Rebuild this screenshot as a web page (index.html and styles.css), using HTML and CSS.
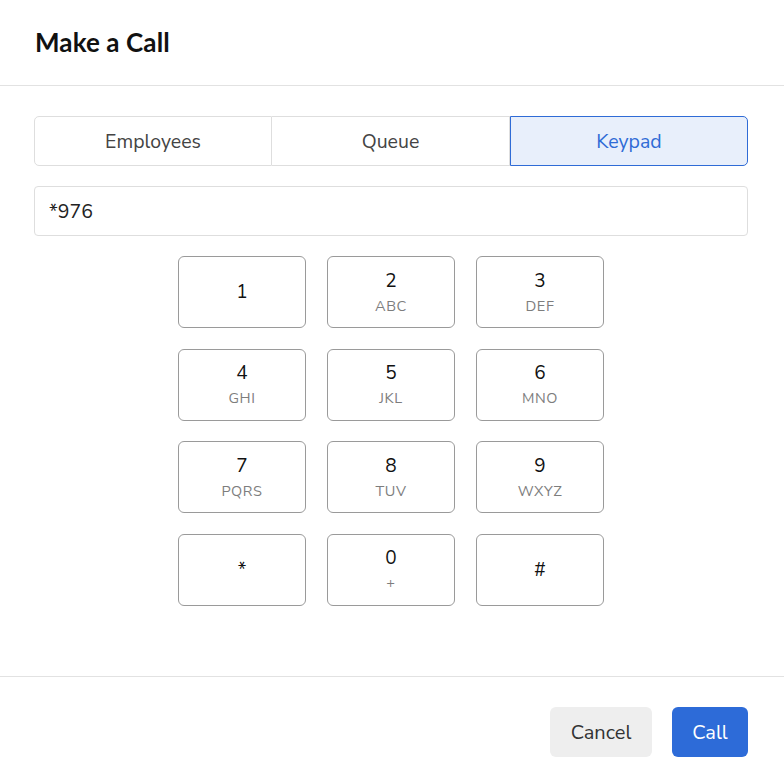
FILE: index.html
```html
<!DOCTYPE html>
<html>
<head>
<meta charset="utf-8">
<link rel="stylesheet" href="styles.css">
</head>
<body>
<div class="dialog">
  <header class="header"><h1 class="title">Make a Call</h1></header>
  <main class="content">
    <div class="tabs">
      <button class="tab">Employees</button>
      <button class="tab">Queue</button>
      <button class="tab active">Keypad</button>
    </div>
    <div class="field">*976</div>
    <div class="keypad">
      <button class="key"><span class="digit">1</span></button>
      <button class="key"><span class="digit">2</span><span class="letters">ABC</span></button>
      <button class="key"><span class="digit">3</span><span class="letters">DEF</span></button>
      <button class="key"><span class="digit">4</span><span class="letters">GHI</span></button>
      <button class="key"><span class="digit">5</span><span class="letters">JKL</span></button>
      <button class="key"><span class="digit">6</span><span class="letters">MNO</span></button>
      <button class="key"><span class="digit">7</span><span class="letters">PQRS</span></button>
      <button class="key"><span class="digit">8</span><span class="letters">TUV</span></button>
      <button class="key"><span class="digit">9</span><span class="letters">WXYZ</span></button>
      <button class="key"><span class="digit">*</span></button>
      <button class="key"><span class="digit">0</span><span class="letters">+</span></button>
      <button class="key"><span class="digit">#</span></button>
    </div>
  </main>
  <footer class="footer">
    <button class="btn cancel">Cancel</button>
    <button class="btn call">Call</button>
  </footer>
</div>
</body>
</html>
```
FILE: styles.css
```css
* { box-sizing: border-box; }
html, body { margin: 0; padding: 0; background: #fff; }
body {
  font-family: "Nunito Sans", "Open Sans", sans-serif;
  color: #222;
  width: 784px;
  height: 775px;
  overflow: hidden;
}
.dialog { display: flex; flex-direction: column; height: 775px; }
.header {
  height: 86px;
  border-bottom: 1px solid #e2e2e2;
  padding: 26px 35px 0;
}
.title {
  margin: 0;
  font-family: "Lato", sans-serif;
  font-weight: 700;
  font-size: 26px;
  line-height: 32px;
  color: #111;
  letter-spacing: 0.1px;
}
.content {
  flex: 1;
  padding: 30px 36px 0 34px;
}
.tabs {
  display: grid;
  grid-template-columns: 1fr 1fr 1fr;
  height: 50px;
}
.tab {
  font: inherit;
  font-size: 19.5px;
  color: #444;
  background: #fff;
  border: 1px solid #dedede;
  border-left: none;
  cursor: pointer;
}
.tab:first-child { border-left: 1px solid #dedede; border-radius: 5px 0 0 5px; }
.tab.active {
  background: #e8effb;
  color: #2f6bd6;
  border: 1px solid #2f6bd6;
  border-radius: 0 5px 5px 0;
}
.field {
  margin-top: 20px;
  height: 50px;
  border: 1px solid #dedede;
  border-radius: 4px;
  padding: 0 14px;
  display: flex;
  align-items: center;
  font-size: 19.5px;
  color: #222;
}
.keypad {
  margin: 20px auto 0;
  width: 426px;
  display: grid;
  grid-template-columns: repeat(3, 128px);
  grid-auto-rows: 72px;
  column-gap: 21px;
  row-gap: 20.5px;
}
.key {
  font: inherit;
  background: #fff;
  border: 1px solid #9a9a9a;
  border-radius: 6px;
  display: flex;
  flex-direction: column;
  align-items: center;
  justify-content: center;
  gap: 5px;
  padding: 0;
  cursor: pointer;
}
.digit { font-size: 19px; color: #111; line-height: 22px; }
.letters { font-size: 14.5px; color: #7d7d7d; line-height: 18px; letter-spacing: 0.6px; }
.footer {
  height: 99px;
  border-top: 1px solid #e2e2e2;
  display: flex;
  justify-content: flex-end;
  align-items: flex-start;
  gap: 20px;
  padding: 30px 36px 0;
}
.btn {
  font: inherit;
  font-size: 20px;
  height: 50px;
  border: none;
  border-radius: 6px;
  cursor: pointer;
}
.cancel { width: 102px; background: #eeeeee; color: #333; }
.call { width: 76px; background: #2d6bd8; color: #fff; }
```
